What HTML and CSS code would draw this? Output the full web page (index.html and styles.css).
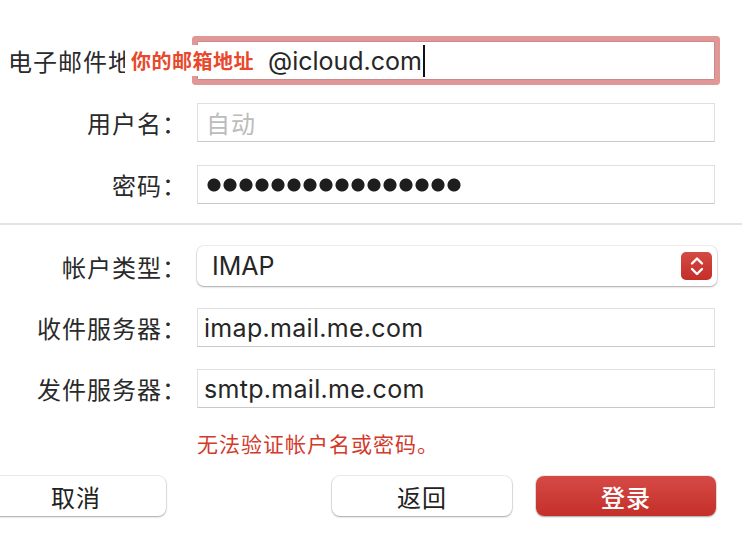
FILE: index.html
```html
<!DOCTYPE html>
<html>
<head>
<meta charset="utf-8">
<title>添加帐户</title>
<link rel="stylesheet" href="styles.css">
</head>
<body>

<div id="sheet">
	<div class="group">
		<div class="row">
			<div class="label clipped">电子邮件地址：</div>
			<div class="field focus"><span class="value">@icloud.com</span><span class="caret"></span></div>
			<div class="hint">你的邮箱地址</div>
		</div>
		<div class="row">
			<div class="label">用户名：</div>
			<div class="field"><span class="placeholder">自动</span></div>
		</div>
		<div class="row">
			<div class="label">密码：</div>
			<div class="field"><span class="dots"></span></div>
		</div>
	</div>

	<div class="sep"></div>

	<div class="group bottom">
		<div class="row">
			<div class="label">帐户类型：</div>
			<div class="popup">
				<span class="popup-text">IMAP</span>
				<span class="stepper">
					<svg width="31" height="28" viewBox="0 0 31 28">
						<path d="M11 11.5 L16 6.5 L21 11.5" fill="none" stroke="#fff" stroke-width="2.4" stroke-linecap="round" stroke-linejoin="round"/>
						<path d="M11 17 L16 22 L21 17" fill="none" stroke="#fff" stroke-width="2.4" stroke-linecap="round" stroke-linejoin="round"/>
					</svg>
				</span>
			</div>
		</div>
		<div class="row">
			<div class="label">收件服务器：</div>
			<div class="field"><span class="value">imap.mail.me.com</span></div>
		</div>
		<div class="row">
			<div class="label">发件服务器：</div>
			<div class="field"><span class="value">smtp.mail.me.com</span></div>
		</div>
	</div>

	<p class="error">无法验证帐户名或密码。</p>

	<div class="actions">
		<button class="btn cancel">取消</button>
		<div class="right">
			<button class="btn">返回</button>
			<button class="btn primary">登录</button>
		</div>
	</div>
</div>

</body>
</html>
```

FILE: styles.css
```css
html, body{
	margin:0;
	padding:0;
	background:#fff;
	overflow:hidden;
}
#sheet{
	width:742px;
	height:538px;
	padding-top:41px;
	box-sizing:border-box;
	font-family:"Inter", "Noto Sans CJK SC", sans-serif;
	color:#262626;
}
.group{
	display:flex;
	flex-direction:column;
	gap:23px;
}
.group.bottom{
	margin-top:21px;
	gap:22px;
}
.row{
	position:relative;
	display:flex;
	align-items:center;
}
.label{
	width:187px;
	flex:none;
	text-align:right;
	white-space:nowrap;
	font-family:"Noto Sans CJK SC", sans-serif;
	font-size:24px;
	letter-spacing:1px;
	color:#2a2a2a;
}
.label.clipped{
	width:125px;
	padding-left:8px;
	box-sizing:border-box;
	overflow:hidden;
	text-align:left;
}
.label.clipped + .field{
	margin-left:72px;
}
.field{
	flex:none;
	width:518px;
	height:39px;
	margin-left:10px;
	box-sizing:border-box;
	display:flex;
	align-items:center;
	padding-left:6px;
	background:#fff;
	border:1px solid #e0e0e0;
	border-bottom-color:#c8c8c8;
	font-size:25px;
	letter-spacing:0.3px;
}
.field.focus{
	border-color:#c98a8a;
	border-radius:1px;
	box-shadow:0 0 0 5px #e29797;
	padding-left:70px;
	letter-spacing:0;
}
.caret{
	display:inline-block;
	width:2px;
	height:32px;
	margin-left:1px;
	background:#111;
}
.hint{
	position:absolute;
	left:125px;
	top:4px;
	height:31px;
	padding:0 6px;
	display:flex;
	align-items:center;
	background:#fff;
	font-family:"Noto Sans CJK SC", sans-serif;
	font-size:20px;
	font-weight:bold;
	letter-spacing:0.5px;
	color:#e8492d;
}
.placeholder{
	padding-left:2px;
	font-family:"Noto Sans CJK SC", sans-serif;
	font-size:24px;
	color:#bcbcbc;
	letter-spacing:1px;
}
.dots{
	display:block;
	margin-left:2px;
	width:256px;
	height:14px;
	background:radial-gradient(circle, #1e1e1e 6px, transparent 7px) 0 0/16px 14px repeat-x;
}
.sep{
	height:2px;
	margin-top:19px;
	background:#e4e4e4;
}
.popup{
	flex:none;
	width:520px;
	height:40px;
	margin-left:10px;
	box-sizing:border-box;
	display:flex;
	align-items:center;
	justify-content:space-between;
	padding:0 5px 0 15px;
	background:#fff;
	border-radius:7px;
	box-shadow:0 0 0 1px rgba(0,0,0,0.06), 0 1px 2px rgba(0,0,0,0.3);
	font-size:25px;
}
.stepper{
	display:block;
	width:31px;
	height:28px;
	border-radius:5px;
	background:linear-gradient(#d44a44, #c42e29);
}
.stepper svg{
	display:block;
}
.error{
	margin:20px 0 0 197px;
	font-family:"Noto Sans CJK SC", sans-serif;
	font-size:21px;
	line-height:30px;
	letter-spacing:1px;
	color:#d23a2c;
}
.actions{
	display:flex;
	justify-content:space-between;
	margin-top:18px;
	padding-right:26px;
}
.right{
	display:flex;
	gap:24px;
}
.btn{
	width:180px;
	height:40px;
	border:none;
	border-radius:8px;
	background:#fff;
	box-shadow:0 0 0 1px rgba(0,0,0,0.07), 0 1px 2px rgba(0,0,0,0.3);
	font-family:"Noto Sans CJK SC", sans-serif;
	font-size:24px;
	letter-spacing:1px;
	color:#222;
	padding:0;
}
.btn.cancel{
	margin-left:-14px;
}
.btn.primary{
	background:linear-gradient(#d54a45, #c52f2a);
	color:#fff;
	font-weight:500;
}
```
